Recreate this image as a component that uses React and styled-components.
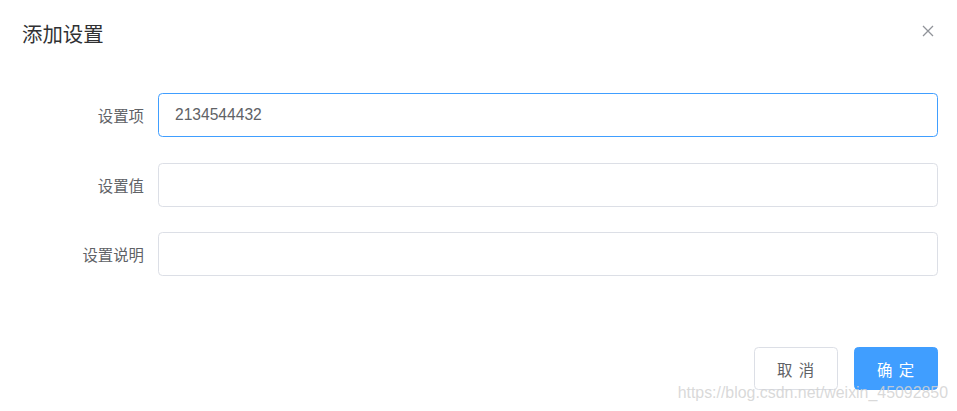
import React from 'react';
import { useState } from 'react';
import styled, { createGlobalStyle } from 'styled-components';

const GlobalStyle = createGlobalStyle`
  html, body {
    margin: 0;
    padding: 0;
    background: #fff;
  }
  body {
    font-family: "Liberation Sans", "Noto Sans CJK SC", sans-serif;
  }
`;

export const Dialog = styled.div`
  position: relative;
  width: 957px;
  height: 411px;
  background: #fff;
  overflow: hidden;
`;

export const Header = styled.div`
  padding: 23px 22px 0;
`;

export const Title = styled.span`
  display: block;
  font-size: 20.4px;
  line-height: 24px;
  color: #303133;
`;

export const CloseButton = styled.button`
  position: absolute;
  top: 24px;
  right: 23px;
  width: 13px;
  height: 13px;
  padding: 0;
  border: none;
  background: transparent;
  cursor: pointer;
  display: flex;
  align-items: center;
  justify-content: center;
`;

export const Form = styled.form`
  display: flex;
  flex-direction: column;
  gap: 25.5px;
  padding: 46px 19px 0 22px;
`;

export const FormItem = styled.div`
  display: flex;
  align-items: center;
`;

export const Label = styled.label`
  width: 136px;
  flex-shrink: 0;
  padding-right: 14px;
  box-sizing: border-box;
  text-align: right;
  font-size: 15.4px;
  color: #606266;
`;

export const Input = styled.input`
  flex: 1;
  height: 44px;
  box-sizing: border-box;
  padding: 0 16px;
  border: 1px solid ${p => (p.$focused ? '#409eff' : '#dcdfe6')};
  border-radius: 4.4px;
  outline: none;
  font-family: inherit;
  font-size: 15.6px;
  color: #606266;
  background: #fff;
`;

export const Footer = styled.div`
  display: flex;
  justify-content: flex-end;
  gap: 16px;
  padding: 71px 19px 0 0;
`;

export const Button = styled.button`
  width: 84px;
  height: 43px;
  box-sizing: border-box;
  border-radius: 4.4px;
  border: 1px solid ${p => (p.$primary ? '#409eff' : '#dcdfe6')};
  background: ${p => (p.$primary ? '#409eff' : '#fff')};
  color: ${p => (p.$primary ? '#fff' : '#606266')};
  font-family: inherit;
  font-size: 15.4px;
  letter-spacing: 1px;
  cursor: pointer;
`;

export const Watermark = styled.div`
  position: absolute;
  right: 9px;
  top: 381px;
  font-size: 15.9px;
  line-height: 24px;
  color: rgba(210, 210, 210, 0.85);
  pointer-events: none;
  white-space: nowrap;
`;

export default function App () {

    const [ item, setItem ] = useState('2134544432');
    const [ value, setValue ] = useState('');
    const [ desc, setDesc ] = useState('');

    return(
        <Dialog>
            <GlobalStyle />
            <Header>
                <Title>添加设置</Title>
            </Header>
            <CloseButton type="button" aria-label="close">
                <svg width="12" height="12" viewBox="0 0 12 12">
                    <path d="M1 1 L11 11 M11 1 L1 11" stroke="#909399" strokeWidth="1.3" fill="none" />
                </svg>
            </CloseButton>
            <Form onSubmit={e => e.preventDefault()}>
                <FormItem>
                    <Label>设置项</Label>
                    <Input $focused value={item} onChange={e => setItem(e.target.value)} />
                </FormItem>
                <FormItem>
                    <Label>设置值</Label>
                    <Input value={value} onChange={e => setValue(e.target.value)} />
                </FormItem>
                <FormItem>
                    <Label>设置说明</Label>
                    <Input value={desc} onChange={e => setDesc(e.target.value)} />
                </FormItem>
            </Form>
            <Footer>
                <Button type="button">取 消</Button>
                <Button type="button" $primary>确 定</Button>
            </Footer>
            <Watermark>https://blog.csdn.net/weixin_45092850</Watermark>
        </Dialog>
    );
}
